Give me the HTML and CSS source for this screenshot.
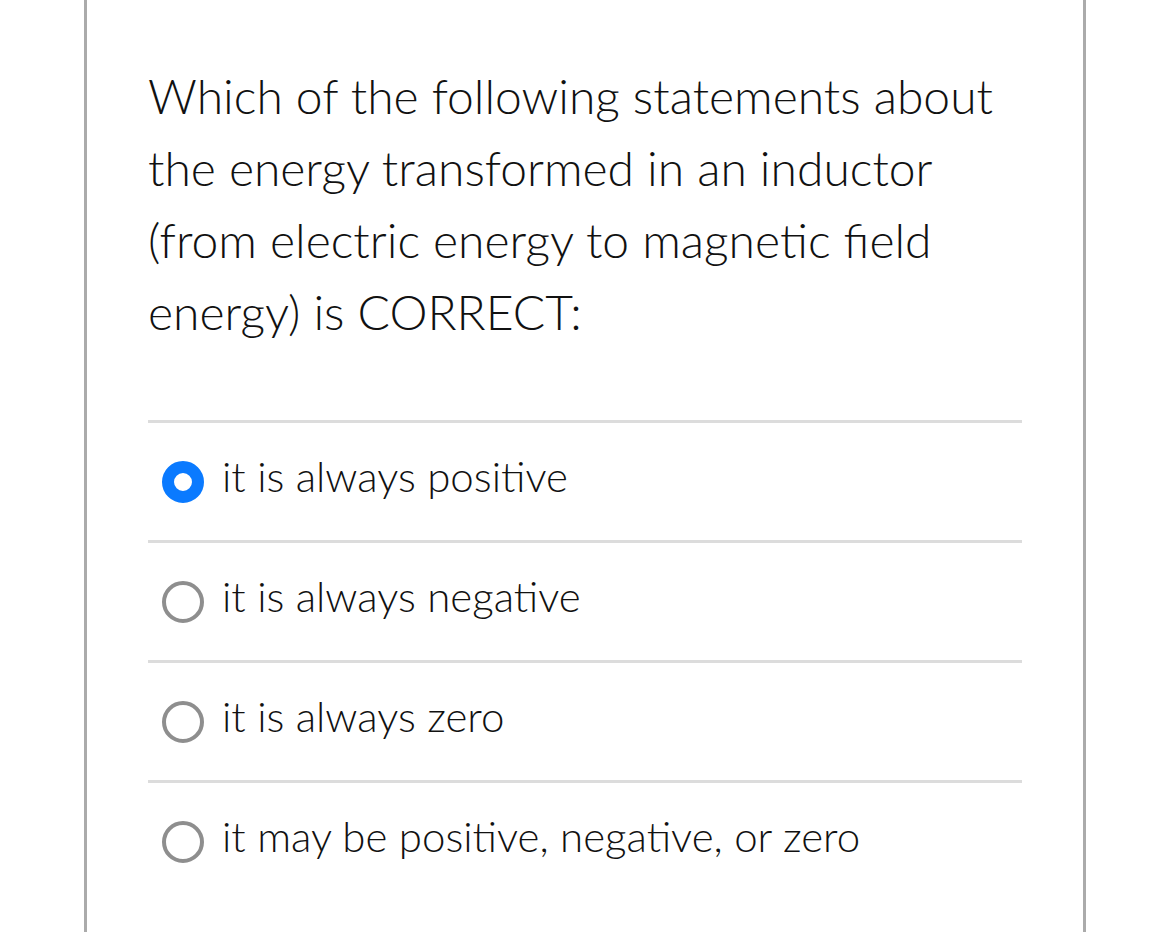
FILE: index.html
```html
<!DOCTYPE html>
<html>
<head>
<meta charset="utf-8">
<link rel="stylesheet" href="styles.css">
</head>
<body>
<div class="card">
  <p class="question">Which of the following statements about the energy transformed in an inductor (from electric energy to magnetic field energy) is CORRECT:</p>
  <ul class="options">
    <li class="option"><span class="radio checked"></span><span class="label">it is always positive</span></li>
    <li class="option"><span class="radio"></span><span class="label">it is always negative</span></li>
    <li class="option"><span class="radio"></span><span class="label">it is always zero</span></li>
    <li class="option"><span class="radio"></span><span class="label">it may be positive, negative, or zero</span></li>
  </ul>
</div>
</body>
</html>
```
FILE: styles.css
```css
html, body {
  margin: 0;
  padding: 0;
  background: #fff;
}
body {
  font-family: "Lato", "Liberation Sans", sans-serif;
  font-weight: 300;
  color: #111;
}
.card {
  margin-left: 84px;
  min-height: 932px;
  border-left: 3px solid #ababab;
  border-right: 3px solid #ababab;
  padding: 0 61px;
  box-sizing: content-box;
  width: 874px;
}
.question {
  margin: 0;
  padding-top: 60px;
  font-size: 48px;
  line-height: 72px;
  padding-bottom: 72px;
}
.options {
  list-style: none;
  margin: 0;
  padding: 0;
}
.option {
  display: flex;
  align-items: center;
  height: 117px;
  border-top: 3px solid #dcdcdc;
  font-size: 42px;
}
.radio {
  width: 42px;
  height: 42px;
  box-sizing: border-box;
  border-radius: 50%;
  border: 4px solid #8e8e8e;
  margin-left: 14px;
  margin-right: 18px;
  flex: none;
}
.radio.checked {
  border: 12px solid #0a7aff;
  background: #fff;
}
.label {
  position: relative;
  top: -6px;
}
```
